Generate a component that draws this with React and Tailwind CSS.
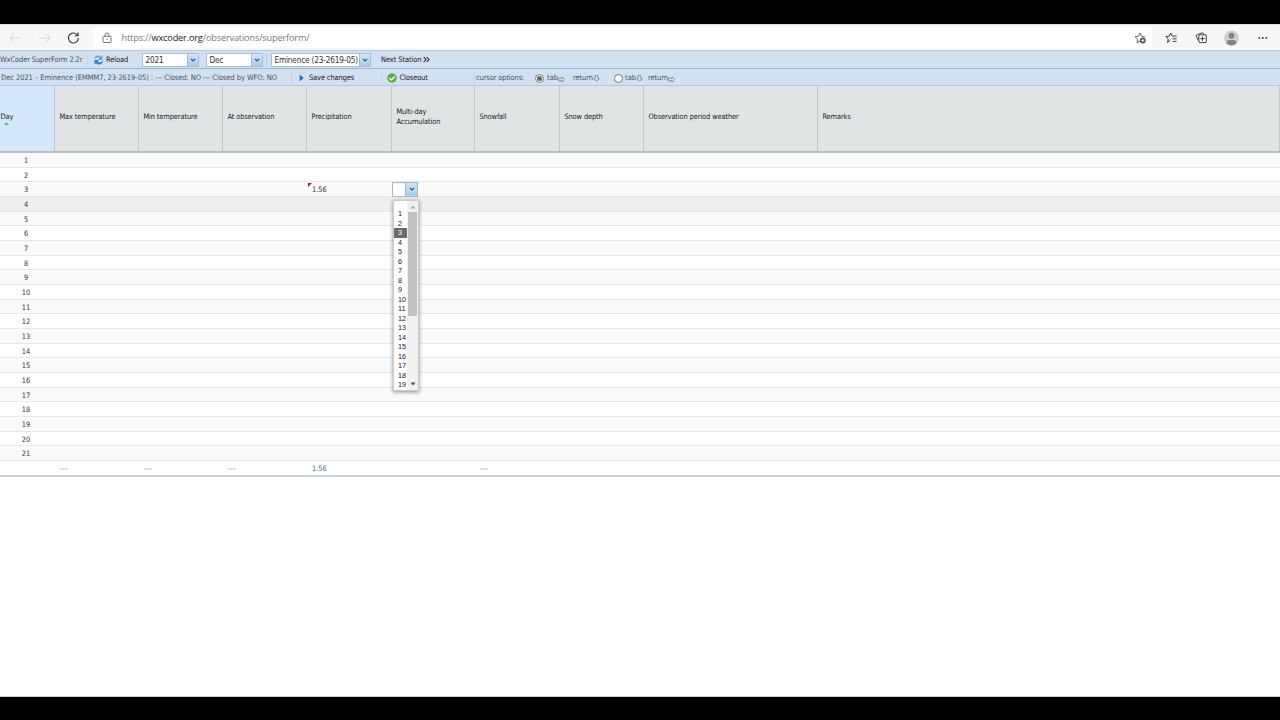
import React from "react";

const columns = [
  { label: "Max temperature", width: "w-[84px]", total: "---" },
  { label: "Min temperature", width: "w-[84px]", total: "---" },
  { label: "At observation", width: "w-[84px]", total: "---" },
  { label: "Precipitation", width: "w-[85px]", total: "1.56" },
  { label: "Multi-day Accumulation", width: "w-[83px]", total: "" },
  { label: "Snowfall", width: "w-[85px]", total: "---" },
  { label: "Snow depth", width: "w-[84px]", total: "" },
  { label: "Observation period weather", width: "w-[174px]", total: "" },
  { label: "Remarks", width: "flex-1", total: "" },
];

const days = Array.from({ length: 21 }, (_, i) => i + 1);
const options = Array.from({ length: 19 }, (_, i) => i + 1);

function Chevron() {
  return (
    <svg viewBox="0 0 8 8" className="h-[8px] w-[8px]" fill="none" stroke="#2c5270" strokeWidth="1.2">
      <path d="M1.9 2.9 4 5 6.1 2.9" />
    </svg>
  );
}

function Select({ value, className }) {
  return (
    <div className={`flex h-[14px] shrink-0 border border-[#a9bfd3] bg-white ${className}`}>
      <span className="min-w-0 flex-1 pl-[2.5px] text-[8.2px] leading-[13.5px] tracking-[-0.18px] text-[#333]">{value}</span>
      <span className="flex w-[11px] shrink-0 items-center justify-center border-l border-[#9abbd2] bg-linear-to-b from-[#cfe6f5] to-[#a9cfe6]">
        <Chevron />
      </span>
    </div>
  );
}

function Arrow({ down }) {
  return (
    <svg viewBox="0 0 8 8" className={down ? "h-[9px] w-[7px]" : "mt-[3px] h-[7px] w-[7px]"} fill="none" stroke="#65717d" strokeWidth="0.8">
      {down ? <path d="M2.3.7h3.4v3.8h1.5L4 7.3.8 4.5h1.5z" /> : <path d="M.5 2.5h4V1l3 3-3 3V5.5h-4z" />}
    </svg>
  );
}

function Radio({ checked }) {
  return (
    <span className="flex h-[9px] w-[9px] shrink-0 items-center justify-center rounded-full border border-[#777] bg-white">
      {checked && <span className="h-[5px] w-[5px] rounded-full bg-[#666]" />}
    </span>
  );
}

function BrowserBar() {
  return (
    <div className="flex h-[26px] shrink-0 items-center border-t border-[#ddd] bg-[#f7f7f7]">
      <svg viewBox="0 0 93 20" className="h-[20px] w-[93px] shrink-0" fill="none">
        <path d="M20.5 10H10M14.5 5.5 10 10l4.5 4.5M39.5 10H50M45.5 5.5 50 10l-4.5 4.5" stroke="#d5d5d5" />
        <path d="M77.6 7.3A5 5 0 1 0 78.4 10M78 4.6v3.2h-3.2" stroke="#333" strokeWidth="1.1" />
      </svg>
      <div className="flex h-[21px] w-[1059px] shrink-0 items-center bg-white">
        <svg viewBox="0 0 10 12" className="ml-[9px] h-[12px] w-[10px]" fill="none" stroke="#666" strokeWidth="0.9">
          <rect x="1" y="4.3" width="8" height="6.2" rx="0.8" />
          <path d="M3 4.3V3a2 2 0 0 1 4 0v1.3" />
          <path d="M4.5 7.4h1" strokeWidth="1.2" />
        </svg>
        <span className="ml-[9.5px] pt-px font-['Open_Sans','Noto_Sans',sans-serif] text-[9.2px] tracking-[-0.17px] whitespace-nowrap text-[#777] [font-stretch:normal]">
          https://<span className="text-[#222]">wxcoder.org</span>/observations/superform/
        </span>
        <svg viewBox="0 0 12 12" className="mr-[6px] ml-auto h-[12px] w-[12px]" fill="none" stroke="#555" strokeWidth="0.9">
          <path d="M6 9 3 10.7l.6-3.5L1 4.7l3.5-.5L6 1l1.5 3.2 3.3.5" />
          <circle cx="8.8" cy="8.5" r="2.9" fill="#555" stroke="none" />
          <path d="M7.3 8.5h3M8.8 7v3" stroke="white" />
        </svg>
      </div>
      <svg viewBox="0 0 128 20" className="h-[20px] w-[128px] shrink-0" fill="none">
        <g stroke="#333" strokeWidth="0.95">
          <path d="M18.3 11.6 15.6 14.7l.6-3.7-2.3-2.4 3.3-.5L18.7 5l1.6 3.1h4.4M20.6 10.8h4M20.6 13.4h4" />
          <path d="M46.5 12.5 44.3 8.5a1.2 1.2 0 0 1 .6-1.6l5-2a1.2 1.2 0 0 1 1.5.5l.6 1.2" />
          <rect x="46.8" y="6.8" width="7.5" height="7.8" rx="1.3" fill="#f7f7f7" />
          <path d="M50.5 8.5v4.4M48.3 10.7h4.4" />
        </g>
        <circle cx="79.5" cy="10" r="7.5" fill="#d0d1ce" />
        <circle cx="79.5" cy="7.7" r="3" fill="#858682" />
        <path d="M74.5 15.2q0-3.2 3-3.2h4q3 0 3 3.2-2.2 2.3-5 2.3t-5-2.3Z" fill="#858682" />
        <path d="M106.5 10h1.7M110 10h1.7M113.5 10h1.7" stroke="#222" strokeWidth="1.4" />
      </svg>
    </div>
  );
}

function StationBar() {
  return (
    <div className="flex h-[19px] shrink-0 items-center border-t border-b border-t-[#b9c8da] border-b-[#9fb7cf] bg-[#d2e1f2] whitespace-nowrap">
      <span className="w-[87px] shrink-0 text-[7.5px] tracking-[-0.13px] text-[#4a5561]">WxCoder SuperForm 2.2r</span>
      <span className="h-[13px] w-px shrink-0 bg-[#c5d5e6]" />
      <svg viewBox="0 0 12 12" className="mr-[2px] ml-[5px] h-[12px] w-[11px] shrink-0">
        <path d="M1 5.4C1.3 1.3 6-.2 8.7 2.4L10.3.9v5H5.5l1.6-1.7C5.2 2.7 3 3.4 1 5.4Z" fill="#62a6d9" />
        <path d="M11 6.6c-.3 4.1-5 5.6-7.7 3L1.7 11.1v-5h4.8L4.9 7.8c1.9 1.5 4.1.8 6.1-1.2Z" fill="#2f7fc0" />
      </svg>
      <span className="w-[36px] shrink-0 text-[7.5px] tracking-[-0.15px] text-[#222]">Reload</span>
      <Select value="2021" className="w-[57px]" />
      <Select value="Dec" className="ml-[7px] w-[57px]" />
      <span className="ml-[3px] h-[13px] w-px shrink-0 bg-[#bfd0e2]" />
      <Select value="Eminence (23-2619-05)" className="ml-[4px] w-[100px]" />
      <span className="ml-[10px] text-[7.5px] tracking-[-0.12px] text-[#222]">Next Station</span>
      <svg viewBox="0 0 7 7" className="ml-[2px] h-[7px] w-[7px]" fill="none" stroke="#222" strokeWidth="1.1">
        <path d="m.7 1 2.3 2.5L.7 6M3.7 1 6 3.5 3.7 6" />
      </svg>
    </div>
  );
}

function StatusBar() {
  return (
    <div className="flex h-[17px] shrink-0 items-center border-b border-[#b3c6da] bg-[#d2e1f2] pt-[2px] text-[7.5px] whitespace-nowrap text-[#4a5561]">
      <span className="w-[291px] shrink-0 pl-[1px] tracking-[-0.065px]">
        Dec 2021 – Eminence (EMMM7, 23-2619-05) : --- Closed: NO --- Closed by WFO: NO
      </span>
      <span className="h-[12px] w-px shrink-0 bg-[#bfd0e2]" />
      <svg viewBox="0 0 5 8" className="ml-[7px] h-[8px] w-[5px] shrink-0" fill="#2368cb">
        <path d="M.6.7 4.8 4 .6 7.3Z" />
      </svg>
      <span className="ml-[5px] w-[72px] shrink-0 tracking-[-0.17px] text-[#222]">Save changes</span>
      <span className="h-[12px] w-px shrink-0 bg-[#c5d5e6]" />
      <svg viewBox="0 0 10 10" className="ml-[5px] h-[10px] w-[10px] shrink-0" fill="none">
        <circle cx="5" cy="5" r="4.7" fill="#57ad45" />
        <path d="m2.4 5.1 1.9 1.8 3.4-3.5" stroke="white" strokeWidth="1.4" />
      </svg>
      <span className="ml-[2.5px] w-[74.5px] shrink-0 tracking-[-0.15px] text-[#222]">Closeout</span>
      <span className="h-[12px] w-px shrink-0 bg-[#c5d5e6]" />
      <span className="ml-[1px] w-[59px] shrink-0 tracking-[-0.15px]">cursor options:</span>
      <Radio checked />
      <span className="ml-[3px] flex w-[26px] shrink-0 items-center">tab<Arrow /></span>
      <span className="flex w-[41px] shrink-0 items-center tracking-[-0.1px]">return<Arrow down /></span>
      <Radio />
      <span className="ml-[2px] flex w-[23px] shrink-0 items-center">tab<Arrow down /></span>
      <span className="flex items-center tracking-[-0.1px]">return<Arrow /></span>
    </div>
  );
}

function AccumulationPicker() {
  return (
    <div className="relative z-10 -mt-[1px] -ml-[3px] h-[15px] w-[26px]">
      <div className="flex h-[15px] border border-[#9abbd2] bg-white">
        <span className="flex-1" />
        <span className="flex w-[12px] items-center justify-center border-l border-[#9abbd2] bg-linear-to-b from-[#cfe6f5] to-[#a9cfe6]">
          <Chevron />
        </span>
      </div>
      <div className="absolute top-[18px] left-[1px] flex h-[191px] w-[26px] border border-[#ccc] bg-white font-['Liberation_Sans',sans-serif] shadow-[0_1px_4px_rgba(0,0,0,0.45)]">
        <div className="w-[13px] shrink-0 pt-[8.6px] text-[7.3px] leading-[9.5px] text-[#222]">
          {options.map((n) => (
            <div key={n} className={n === 3 ? "h-[9.5px] bg-[#6b6b6b] pl-[4px] text-white" : "h-[9.5px] pl-[4px]"}>
              {n}
            </div>
          ))}
        </div>
        <div className="flex flex-1 flex-col items-center bg-[#f1f1f1]">
          <svg viewBox="0 0 8 11" className="h-[11px] w-[8px] shrink-0" fill="#a8a8a8">
            <path d="M1.5 7.5 4 4.5l2.5 3Z" />
          </svg>
          <div className="h-[104px] w-[9px] shrink-0 bg-[#c1c1c1]" />
          <svg viewBox="0 0 8 11" className="mt-auto h-[11px] w-[8px] shrink-0" fill="#505050">
            <path d="M1.5 3.5 4 6.5l2.5-3Z" />
          </svg>
        </div>
      </div>
    </div>
  );
}

function rowTone(day) {
  if (day === 4) return "bg-[#efefef]";
  return day % 2 ? "bg-[#fafafa]" : "bg-white";
}

export default function App() {
  return (
    <div className="flex h-[720px] w-[1280px] flex-col overflow-hidden bg-white font-['DejaVu_Sans_Condensed','DejaVu_Sans','Noto_Sans',sans-serif] [font-stretch:condensed]">
      <div className="h-[24px] shrink-0 bg-black" />
      <BrowserBar />
      <StationBar />
      <StatusBar />
      <div className="flex h-[67px] shrink-0 border-b-2 border-[#b6bec4] bg-[#e1e4e5] text-[7.4px] leading-[10px] tracking-[-0.11px] text-[#222]">
        <div className="flex w-[55px] shrink-0 flex-col justify-center border-r border-[#c3c9cd] bg-[#d5e7fa] pl-[0.5px]">
          <span>Day</span>
          <svg viewBox="0 0 5 4" className="ml-[3.5px] h-[4px] w-[5px]" fill="#6f9cc4">
            <path d="M0 3 2.5.3 5 3Z" />
          </svg>
        </div>
        {columns.map((c) => (
          <div key={c.label} className={`flex shrink-0 items-center border-r border-[#c3c9cd] pr-[4px] pb-[4px] pl-[4.4px] ${c.width}`}>
            {c.label}
          </div>
        ))}
      </div>
      <div className="flex shrink-0 flex-col text-[7.4px] text-[#333]">
        {days.map((d) => (
          <div key={d} className={`flex h-[14.68px] shrink-0 items-center border-b border-[#e8e8e8] pt-[1.4px] ${rowTone(d)}`}>
            <div className="w-[52px] shrink-0 text-center">{d}</div>
            {d === 3 && (
              <>
                <div className="flex w-[343px] shrink-0 pl-[256px]">
                  <svg viewBox="0 0 4 4" className="-mt-[1px] h-[4px] w-[4px] shrink-0" fill="#b32020">
                    <path d="M0 0h4L0 4Z" />
                  </svg>
                  <span>1.56</span>
                </div>
                <AccumulationPicker />
              </>
            )}
          </div>
        ))}
      </div>
      <div className="flex h-[16px] shrink-0 items-center border-b-2 border-[#c2d2dc] pt-px pl-[55px] text-[7.4px] text-[#4a7186]">
        {columns.map((c) => (
          <div key={c.label} className={`shrink-0 pl-[5px] ${c.width} ${c.total === "---" ? "tracking-[0.2px]" : ""}`}>{c.total}</div>
        ))}
      </div>
      <div className="flex-1 border-b border-[#ccc]" />
      <div className="h-[23px] shrink-0 bg-black" />
    </div>
  );
}
